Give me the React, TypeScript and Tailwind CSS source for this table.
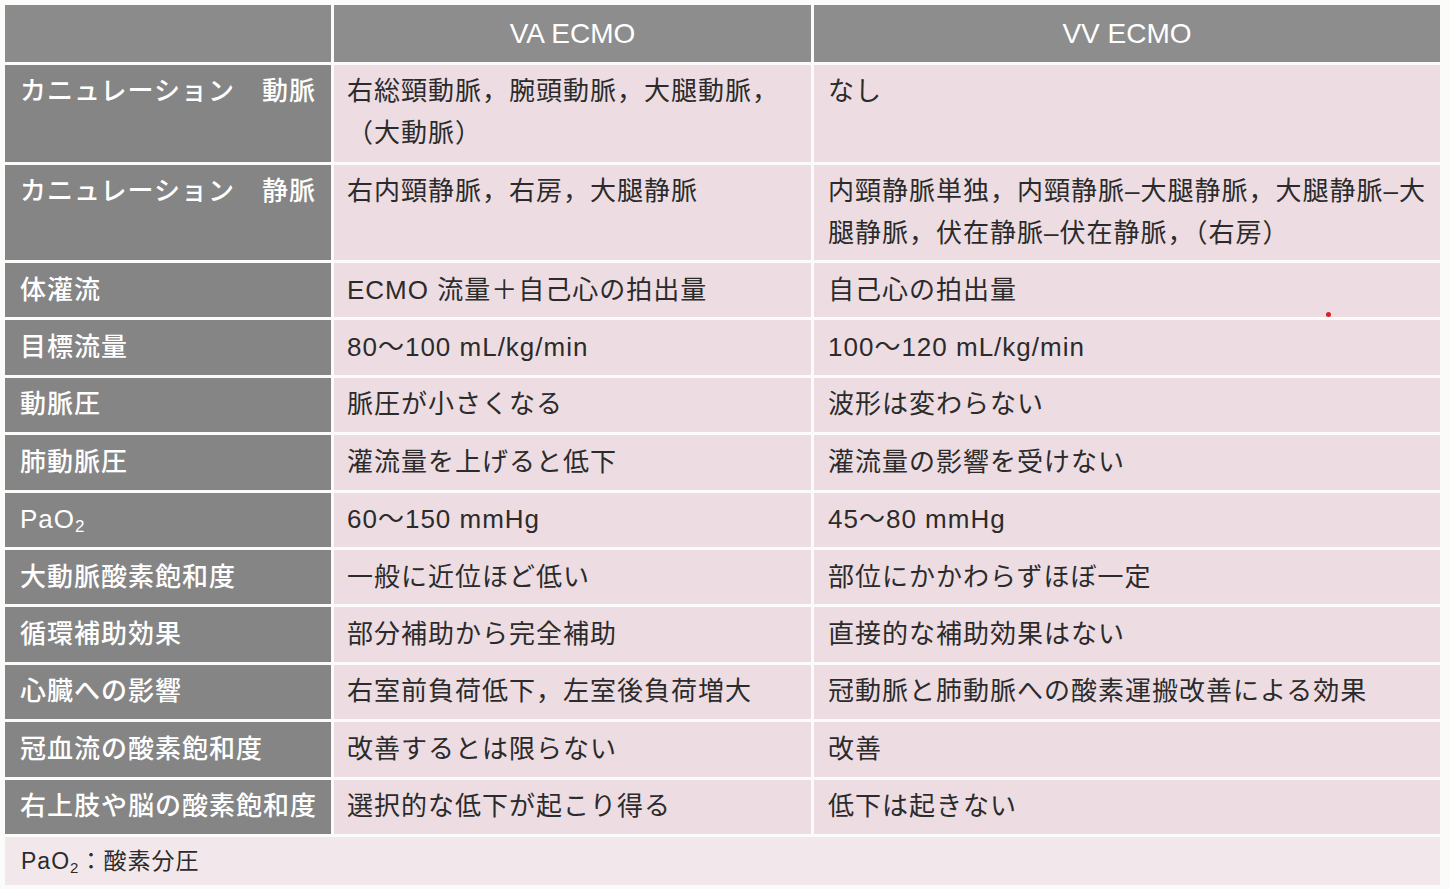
const rows: { label: React.ReactNode; va: React.ReactNode; vv: React.ReactNode; tall?: boolean }[] = [
  {
    label: "カニュレーション　動脈",
    va: (
      <>
        右総頸動脈，腕頭動脈，大腿動脈，
        <br />
        （大動脈）
      </>
    ),
    vv: "なし",
    tall: true,
  },
  {
    label: "カニュレーション　静脈",
    va: "右内頸静脈，右房，大腿静脈",
    vv: (
      <>
        内頸静脈単独，内頸静脈–大腿静脈，大腿静脈–大
        <br />
        腿静脈，伏在静脈–伏在静脈，（右房）
      </>
    ),
    tall: true,
  },
  { label: "体灌流", va: "ECMO 流量＋自己心の拍出量", vv: "自己心の拍出量" },
  { label: "目標流量", va: "80〜100 mL/kg/min", vv: "100〜120 mL/kg/min" },
  { label: "動脈圧", va: "脈圧が小さくなる", vv: "波形は変わらない" },
  { label: "肺動脈圧", va: "灌流量を上げると低下", vv: "灌流量の影響を受けない" },
  {
    label: (
      <>
        PaO<span className="relative top-[4px] text-[17px]">2</span>
      </>
    ),
    va: "60〜150 mmHg",
    vv: "45〜80 mmHg",
  },
  { label: "大動脈酸素飽和度", va: "一般に近位ほど低い", vv: "部位にかかわらずほぼ一定" },
  { label: "循環補助効果", va: "部分補助から完全補助", vv: "直接的な補助効果はない" },
  { label: "心臓への影響", va: "右室前負荷低下，左室後負荷増大", vv: "冠動脈と肺動脈への酸素運搬改善による効果" },
  { label: "冠血流の酸素飽和度", va: "改善するとは限らない", vv: "改善" },
  { label: "右上肢や脳の酸素飽和度", va: "選択的な低下が起こり得る", vv: "低下は起きない" },
];

export default function App() {
  return (
    <div
      className="relative min-h-[889px] w-[1450px] bg-[#fbfbfa] pl-[5px] pt-[5px]"
      style={{ fontFamily: '"Liberation Sans", "Noto Sans CJK JP", sans-serif' }}
    >
      <div className="grid w-[1435px] grid-cols-[326px_477px_1fr] grid-rows-[57px_97px_95px_repeat(10,54.4px)] gap-[3px] text-[26px] tracking-[1px]">
        <div className="bg-[#8b8b8b]" />
        <div className="flex items-center justify-center bg-[#8d8d8d] text-[28px] tracking-normal text-white">VA ECMO</div>
        <div className="flex items-center justify-center bg-[#8d8d8d] text-[28px] tracking-normal text-white">VV ECMO</div>

        {rows.map((r, i) => (
          <div key={i} className="contents">
            <div
              className={`flex bg-[#858585] pl-[15px] font-medium text-white ${
                r.tall ? "items-start pt-[5px] leading-[42px]" : "items-center"
              }`}
            >
              <span>{r.label}</span>
            </div>
            <div
              className={`flex bg-[#eddde3] pl-[13px] text-[#2b2b2b] ${
                r.tall ? "items-start pt-[5px] leading-[42px]" : "items-center"
              }`}
            >
              <span>{r.va}</span>
            </div>
            <div
              className={`flex bg-[#eddde3] pl-[14px] text-[#2b2b2b] ${
                r.tall ? "items-start pt-[5px] leading-[42px]" : "items-center"
              }`}
            >
              <span>{r.vv}</span>
            </div>
          </div>
        ))}
      </div>

      <div className="mt-[3px] flex h-[48px] w-[1435px] items-center bg-[#f2e8ec] pl-[16px] text-[23px] tracking-[1px] text-[#2b2b2b]">
        <span>
          PaO<span className="relative top-[4px] text-[15px]">2</span>：酸素分圧
        </span>
      </div>

      <div className="absolute left-[1326px] top-[312px] h-[5px] w-[5px] rounded-full bg-[#d6202a]" />
    </div>
  );
}
